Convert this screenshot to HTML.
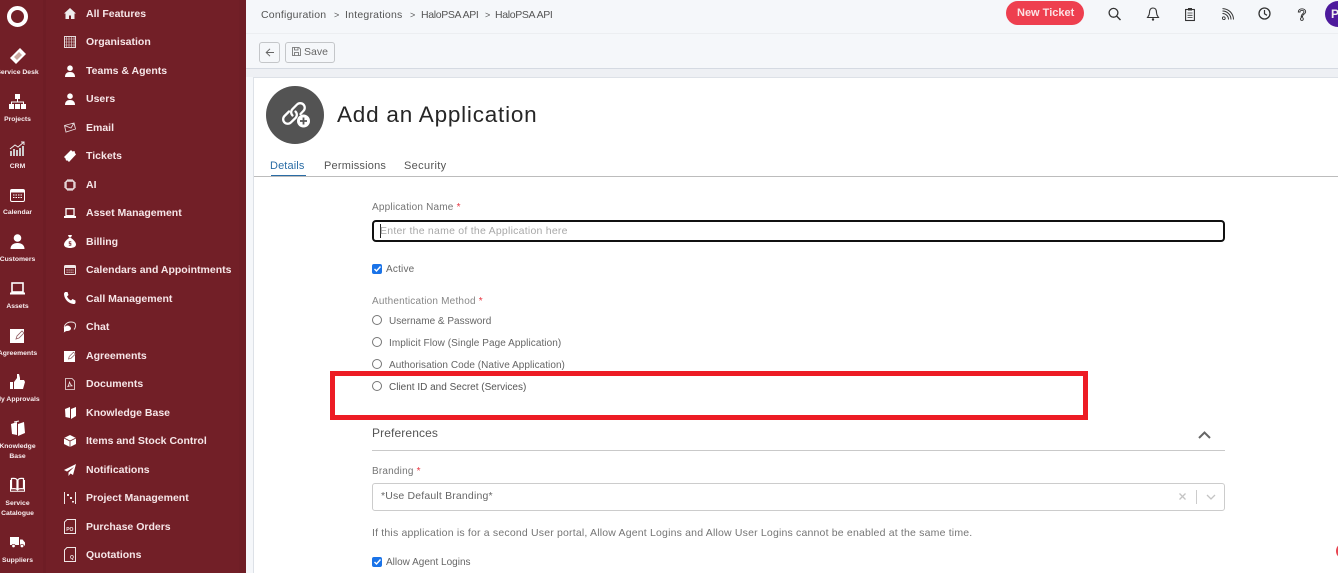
<!DOCTYPE html>
<html><head><meta charset="utf-8">
<style>
html,body{margin:0;padding:0;width:1338px;height:573px;overflow:hidden;background:#f5f7fa;font-family:"Liberation Sans",sans-serif}
#w{position:absolute;left:0;top:0;width:1338px;height:573px;overflow:hidden;background:#f5f7fa}
.a,.t{position:absolute}
.t{white-space:nowrap;line-height:14px}
.n{left:86px;color:#f6e6e8;font-size:10.5px;font-weight:bold;letter-spacing:0}
.r{color:#f8eef0;font-size:6.8px;font-weight:bold;text-align:center;width:100px;left:-32.5px;line-height:10px;white-space:nowrap;margin-top:1px}
.c{color:#555;font-size:10.5px;letter-spacing:.22px}
.g{color:#555;font-size:9px}
.l{color:#757575;font-size:10px;letter-spacing:.2px}
.o{color:#666;font-size:10px;letter-spacing:0}
.red{color:#e8343f}
.rb{position:absolute;left:372px;width:10px;height:10px;border:1px solid #777;border-radius:50%;background:#fff;box-sizing:border-box}
.cb{position:absolute;left:372px;width:10px;height:10px;border-radius:2px;background:#1a73e8}
svg{position:absolute;overflow:visible}
</style></head><body><div id="w">

<div class="a" style="left:0;top:0;width:246px;height:573px;background:#721f27"></div>
<div class="a" style="left:43px;top:0;width:3px;height:573px;background:#6e1d25"></div>
<div class="a" style="left:239px;top:0;width:7px;height:573px;background:#6f1e26"></div>

<!-- rail -->
<div class="a" style="left:7px;top:6px;width:21px;height:21px;box-sizing:border-box;border:4px solid #fff;border-radius:50%"></div>

<svg style="left:9px;top:47px" width="18" height="18" viewBox="0 0 18 18"><path d="M1 11 L11 1 L17 7 L7 17 Z" fill="#fff"/><path d="M5 10 L10 5 L13 8 L8 13 Z" fill="#c9a9a0"/></svg>
<div class="a r" style="top:67px">Service Desk</div>
<svg style="left:9px;top:94px" width="17" height="15" viewBox="0 0 17 15"><rect x="6" y="0" width="5" height="5" fill="#fff"/><path d="M8.500 5v3M2.500 10V8h12v2" stroke="#fff" fill="none"/><rect x="0" y="10" width="5" height="5" fill="#fff"/><rect x="6" y="10" width="5" height="5" fill="#fff"/><rect x="12" y="10" width="5" height="5" fill="#fff"/></svg>
<div class="a r" style="top:114px">Projects</div>
<svg style="left:10px;top:141px" width="15" height="15" viewBox="0 0 15 15"><path d="M1 15V10M4 15V8M7 15V9M10 15V7M13 15V5" stroke="#ccc" stroke-width="2"/><path d="M0 8 L5 4 L8 6 L14 1M11 1h3v3" stroke="#eee" fill="none"/></svg>
<div class="a r" style="top:161px">CRM</div>
<svg style="left:10px;top:188px" width="15" height="14" viewBox="0 0 15 14"><rect x=".5" y="1.500" width="14" height="12" rx="1.500" fill="none" stroke="#fff"/><rect x="1" y="2" width="13" height="2.500" fill="#fff"/><path d="M3 7h9M3 9.500h9" stroke="#fff" stroke-dasharray="1.500 1"/></svg>
<div class="a r" style="top:207px">Calendar</div>
<svg style="left:10px;top:234px" width="15" height="15" viewBox="0 0 14 15"><circle cx="7" cy="4" r="3.800" fill="#fff"/><path d="M0 15c0-4 3-6 7-6s7 2 7 6z" fill="#fff"/></svg>
<div class="a r" style="top:254px">Customers</div>
<svg style="left:10px;top:282px" width="15" height="13" viewBox="0 0 15 13"><rect x="2" y="1" width="11" height="9" fill="none" stroke="#fff" stroke-width="1.600"/><rect x="0" y="10.500" width="15" height="2" fill="#fff"/></svg>
<div class="a r" style="top:301px">Assets</div>
<svg style="left:10px;top:328px" width="15" height="15" viewBox="0 0 15 15"><rect x="0" y="1" width="14" height="14" fill="#fff"/><path d="M6 11l1-3 5-5 2 2-5 5z" fill="#fff" stroke="#8f5a5f" stroke-width=".8"/></svg>
<div class="a r" style="top:348px">Agreements</div>
<svg style="left:10px;top:374px" width="15" height="16" viewBox="0 0 15 16"><path d="M0 8h3v7H0zM4 8l3-4V0h2l1 4v2h4l1 2-2 7H4z" fill="#fff"/></svg>
<div class="a r" style="top:394px">My Approvals</div>
<svg style="left:11px;top:421px" width="14" height="16" viewBox="0 0 14 16"><path d="M0 3l6-2v13l-5-1zM7 3l6-2 1 11-7 3z" fill="#fff"/><path d="M3 1l5-1M9 5l3-1" stroke="#fff"/></svg>
<div class="a r" style="top:441px">Knowledge</div>
<div class="a r" style="top:451px">Base</div>
<svg style="left:10px;top:478px" width="15" height="14" viewBox="0 0 15 14"><path d="M1.500 .5c2-.3 4.500-.3 5.500 1.300v9.700c-1-1-3.500-1-5.500-.7zM8 1.800c1-1.600 3.500-1.600 5.500-1.300v10.300c-2-.3-4.500-.3-5.500.7z" fill="none" stroke="#fff" stroke-width="1.200"/><path d="M.5 2v11.300h14V2" fill="none" stroke="#fff"/></svg>
<div class="a r" style="top:498px">Service</div>
<div class="a r" style="top:508px">Catalogue</div>
<svg style="left:10px;top:537px" width="15" height="11" viewBox="0 0 15 11"><rect x="0" y="0" width="9" height="8" fill="#fff"/><path d="M10 2.500h2.500L15 5.500V8.500h-5z" fill="#fff"/><circle cx="3.500" cy="9" r="1.700" fill="#fff" stroke="#721f27" stroke-width=".6"/><circle cx="12" cy="9" r="1.700" fill="#fff" stroke="#721f27" stroke-width=".6"/></svg>
<div class="a r" style="top:555px">Suppliers</div>

<!-- menu icons -->
<svg style="left:64px;top:8px" width="12" height="11" viewBox="0 0 12 11"><path d="M6 0L0 5.500h1.500V11h3.500V7.500h2V11h3.500V5.500H12z" fill="#eee"/></svg>
<svg style="left:64px;top:36px" width="12" height="12" viewBox="0 0 12 12"><rect x=".5" y=".5" width="11" height="11" fill="none" stroke="#e5dadb"/><path d="M2.500 0v12M5 0v12M7.500 0v12M10 0v12M0 3h12M0 6h12M0 9h12" stroke="#e5dadb" stroke-width=".6"/></svg>
<svg style="left:65px;top:65px" width="10" height="12" viewBox="0 0 10 12"><circle cx="5" cy="3.200" r="2.800" fill="#fff"/><path d="M0 12c0-3.500 2-5 5-5s5 1.500 5 5z" fill="#fff"/></svg>
<svg style="left:65px;top:93px" width="10" height="12" viewBox="0 0 10 12"><circle cx="5" cy="3.200" r="2.800" fill="#fff"/><path d="M0 12c0-3.500 2-5 5-5s5 1.500 5 5z" fill="#fff"/></svg>
<svg style="left:64px;top:122px" width="12" height="11" viewBox="0 0 12 11"><path d="M.5 3.500L10 1l1.500 6-9.500 3z M.5 3.500L7 6l3-5" fill="none" stroke="#e5dadb" stroke-width=".9"/></svg>
<svg style="left:64px;top:150px" width="12" height="12" viewBox="0 0 12 12"><path d="M0 7L7 0l1.500 1.500 2-.5.5 2L12 4.500 5 12 3.500 10.500 2 10.500 1.500 8.500z" fill="#fff"/></svg>
<svg style="left:64px;top:179px" width="12" height="12" viewBox="0 0 12 12"><rect x="2" y="2" width="8" height="8" rx="1" fill="none" stroke="#fff" stroke-width="1.200"/><path d="M4 0v2M6 0v2M8 0v2M4 10v2M6 10v2M8 10v2M0 4h2M0 6h2M0 8h2M10 4h2M10 6h2M10 8h2" stroke="#fff"/></svg>
<svg style="left:64px;top:208px" width="12" height="10" viewBox="0 0 12 10"><rect x="2" y=".7" width="8" height="7" fill="none" stroke="#fff" stroke-width="1.300"/><rect x="0" y="8" width="12" height="2" fill="#fff"/></svg>
<svg style="left:64px;top:235px" width="12" height="13" viewBox="0 0 12 13"><path d="M4 0h4L7 2.500H5z" fill="#fff"/><path d="M5 3h2c2 1.500 5 4 5 6.500S9 13 6 13 0 12 0 9.500 3 4.500 5 3z" fill="#fff"/><path d="M7.300 6.800H5.200v1.700h1.700v1.700H4.800" fill="none" stroke="#721f27" stroke-width=".8"/></svg>
<svg style="left:64px;top:264px" width="12" height="11" viewBox="0 0 12 11"><rect x=".5" y="1.500" width="11" height="9" rx="1" fill="none" stroke="#f0e6e6"/><rect x="1" y="2" width="10" height="2" fill="#f0e6e6"/><path d="M2.500 6h7M2.500 8.300h7" stroke="#f0e6e6" stroke-dasharray="1.200 .8"/></svg>
<svg style="left:64px;top:292px" width="12" height="12" viewBox="0 0 12 12"><path d="M1 0h2.500l1 3L3 4.500c.8 1.800 2.200 3.200 4 4L8.500 7l3 1.500V11l-1 1C4.500 12 0 7 0 1.500z" fill="#fff"/></svg>
<svg style="left:64px;top:321px" width="12" height="11" viewBox="0 0 12 11"><path d="M5 8.500c-1.500 0-3 1-4.500 2 0 0 .5-1.500 0-2.500C-.5 4 3 1 7 1s5 2 4.500 4.500c-.3 1.500-1 2.500-1.500 3" fill="none" stroke="#f0e6e6" stroke-width=".9"/><path d="M0 8c0-2 2-3.500 3.500-3.500S7 6 7 7.500 5 10 3 10 0 11 0 11z" fill="#fff"/></svg>
<svg style="left:64px;top:350px" width="12" height="12" viewBox="0 0 12 12"><rect x="0" y="1" width="11" height="11" fill="#fff"/><path d="M4.500 9l.7-2.500L9.500 2.200 11.500 4 7 8.300z" fill="#fff" stroke="#8f5a5f" stroke-width=".7"/></svg>
<svg style="left:65px;top:378px" width="10" height="12" viewBox="0 0 10 12"><path d="M.5.500H7L9.500 3v8.500H.5zM2.500 9c1-1 2-4 2-5.500C4.500 5 6 7.500 7.500 8 6 7.800 3.500 8 2.500 9z" fill="none" stroke="#f0e6e6" stroke-width=".8"/></svg>
<svg style="left:65px;top:407px" width="11" height="12" viewBox="0 0 11 12"><path d="M0 2l5-2v11L.5 10zM6 2l5-2v9l-5 3z" fill="#fff"/></svg>
<svg style="left:64px;top:435px" width="12" height="12" viewBox="0 0 12 12"><path d="M0 3l6-3 6 3v6l-6 3-6-3z" fill="#fff"/><path d="M0 3l6 3 6-3M6 6v6" stroke="#721f27" fill="none" stroke-width=".8"/></svg>
<svg style="left:64px;top:464px" width="12" height="12" viewBox="0 0 12 12"><path d="M12 0L0 6l3 1.500L10 3 4.500 8.500V12l2-2.500L9 11z" fill="#fff"/></svg>
<svg style="left:64px;top:492px" width="12" height="12" viewBox="0 0 12 12"><path d="M.5 0v12M11.500 0v12" stroke="#f0e6e6"/><path d="M3 2h2v2H3zM6 5h2v2H6zM8 9h2v1.500H8z" fill="#f0e6e6"/></svg>
<svg style="left:64px;top:519px" width="12" height="15" viewBox="0 0 12 15"><path d="M.5 3L3 .5h8.500v14H.5z" fill="none" stroke="#f0e6e6"/><text x="2.200" y="12" font-size="5" font-weight="bold" fill="#f0e6e6" font-family="Liberation Sans">PO</text></svg>
<svg style="left:64px;top:547px" width="12" height="15" viewBox="0 0 12 15"><path d="M.5 3L3 .5h8.500v14H.5z" fill="none" stroke="#f0e6e6"/><text x="6" y="12" font-size="5" font-weight="bold" fill="#f0e6e6" font-family="Liberation Sans">Q</text></svg>

<div class="t n" style="top:7px">All Features</div>
<div class="t n" style="top:35px">Organisation</div>
<div class="t n" style="top:64px">Teams &amp; Agents</div>
<div class="t n" style="top:92px">Users</div>
<div class="t n" style="top:121px">Email</div>
<div class="t n" style="top:149px">Tickets</div>
<div class="t n" style="top:178px">AI</div>
<div class="t n" style="top:206px">Asset Management</div>
<div class="t n" style="top:235px">Billing</div>
<div class="t n" style="top:263px">Calendars and Appointments</div>
<div class="t n" style="top:292px">Call Management</div>
<div class="t n" style="top:320px">Chat</div>
<div class="t n" style="top:349px">Agreements</div>
<div class="t n" style="top:377px">Documents</div>
<div class="t n" style="top:406px">Knowledge Base</div>
<div class="t n" style="top:434px">Items and Stock Control</div>
<div class="t n" style="top:463px">Notifications</div>
<div class="t n" style="top:491px">Project Management</div>
<div class="t n" style="top:520px">Purchase Orders</div>
<div class="t n" style="top:548px">Quotations</div>

<!-- top bar -->
<div class="a" style="left:246px;top:33px;width:1092px;height:1px;background:#eceef1"></div>
<div class="a" style="left:246px;top:68px;width:1092px;height:1px;background:#d5dae2"></div>
<div class="a" style="left:246px;top:69px;width:1092px;height:8px;background:#eef0f4"></div>
<div class="t c" style="left:261px;top:8px">Configuration</div>
<div class="t g" style="left:334px;top:8px">&gt;</div>
<div class="t c" style="left:345px;top:8px">Integrations</div>
<div class="t g" style="left:410px;top:8px">&gt;</div>
<div class="t c" style="left:421px;top:8px;letter-spacing:-.35px">HaloPSA API</div>
<div class="t g" style="left:485px;top:8px">&gt;</div>
<div class="t c" style="left:495px;top:8px;letter-spacing:-.35px">HaloPSA API</div>

<div class="a" style="left:259px;top:42px;width:21px;height:21px;box-sizing:border-box;border:1px solid #c4c6c9;border-radius:3px"></div>
<svg style="left:265px;top:48px" width="10" height="9" viewBox="0 0 10 9"><path d="M5 .8L1.200 4.500 5 8.200M1.500 4.500H9" fill="none" stroke="#666"/></svg>
<div class="a" style="left:285px;top:42px;width:50px;height:21px;box-sizing:border-box;border:1px solid #c4c6c9;border-radius:3px"></div>
<svg style="left:292px;top:47px" width="9" height="9" viewBox="0 0 9 9"><path d="M.5.500H7L8.500 2v6.500H.5zM2.500 .5v2.500h3.500V.5M2.500 8.500V5.500h4v3" fill="none" stroke="#666" stroke-width=".8"/></svg>
<div class="t c" style="left:304px;top:45px;color:#666;letter-spacing:0">Save</div>

<div class="a" style="left:1006px;top:1px;width:78px;height:24px;background:#ee3f4f;border-radius:12px"></div>
<div class="t" style="left:1017px;top:6px;color:#fbe3e5;font-size:11px;font-weight:bold;letter-spacing:0">New Ticket</div>

<svg style="left:1108px;top:7px" width="13" height="14" viewBox="0 0 13 14"><circle cx="5.500" cy="5.800" r="4.400" fill="none" stroke="#333" stroke-width="1.300"/><path d="M8.800 9.200L12.500 13" stroke="#333" stroke-width="1.400"/></svg>
<svg style="left:1147px;top:7px" width="12" height="14" viewBox="0 0 12 14"><path d="M6 1c2.500 0 3.500 2 3.500 4.500 0 2.500 1 3.500 2 5H.5c1-1.500 2-2.500 2-5C2.500 3 3.500 1 6 1z" fill="none" stroke="#333" stroke-width="1.100"/><circle cx="6" cy="12.500" r="1.200" fill="#333"/></svg>
<svg style="left:1185px;top:8px" width="10" height="13" viewBox="0 0 10 13"><rect x=".6" y="1.500" width="8.800" height="11" fill="none" stroke="#333" stroke-width="1.100"/><rect x="3" y="0" width="4" height="2.500" fill="#333"/><path d="M2.500 5h5M2.500 7.300h5M2.500 9.600h5" stroke="#333" stroke-width=".8"/></svg>
<svg style="left:1222px;top:8px" width="12" height="12" viewBox="0 0 12 12"><circle cx="1.800" cy="10.200" r="1.400" fill="none" stroke="#333" stroke-width=".9"/><path d="M.5 5.500A6 6 0 0 1 6.500 11.500M.5 3A8.500 8.500 0 0 1 9 11.500M.5.600A11 11 0 0 1 11.500 11.500" fill="none" stroke="#333" stroke-width="1"/></svg>
<svg style="left:1258px;top:7px" width="13" height="13" viewBox="0 0 13 13"><circle cx="6.500" cy="6.500" r="5.500" fill="none" stroke="#333" stroke-width="1.300"/><path d="M6.500 3v3.800L9 8.300" fill="none" stroke="#333" stroke-width="1.200"/></svg>
<svg style="left:1297px;top:8px" width="10" height="13" viewBox="0 0 10 13"><path d="M1.300 4C1.300 2 3 .8 5 .8S8.700 2 8.700 4C8.700 6 5.500 6 5.500 8.500H4.200C4.200 6 7 5.500 7 4 7 3 6 2.300 5 2.300S3 3 3 4z" fill="none" stroke="#333" stroke-width=".9"/><circle cx="4.900" cy="11" r="1.400" fill="none" stroke="#333" stroke-width=".9"/></svg>
<div class="a" style="left:1325px;top:1px;width:26px;height:26px;border-radius:50%;background:#4d1a9c"></div>
<div class="t" style="left:1331px;top:7px;color:#eee;font-size:12px;font-weight:bold">P</div>

<!-- card -->
<div class="a" style="left:253px;top:77px;width:1085px;height:496px;background:#fff;border:1px solid #dde1e7;border-width:1px 0 0 1px;box-sizing:border-box"></div>
<div class="a" style="left:266px;top:86px;width:58px;height:58px;border-radius:50%;background:#535353"></div>
<svg style="left:280px;top:98px" width="32" height="32" viewBox="0 0 32 32"><g fill="none" stroke="#fff" stroke-width="2.300" stroke-linecap="round"><path d="M9 13.500L4.500 18a4.500 4.500 0 0 0 6.400 6.400L15.500 20a4.500 4.500 0 0 0 0-6.400"/><path d="M12.500 17.500a4.500 4.500 0 0 1 0-6.400L17 6.500a4.500 4.500 0 0 1 6.400 6.400L20.500 16"/></g><circle cx="23.500" cy="23" r="6.500" fill="#fff"/><path d="M23.500 19.500v7M20 23h7" stroke="#535353" stroke-width="1.800"/></svg>
<div class="t" style="left:337px;top:101px;font-size:22.500px;line-height:28px;color:#262626;letter-spacing:.78px">Add an Application</div>

<div class="t" style="left:270px;top:159px;font-size:11px;color:#2a6ca5;letter-spacing:.12px">Details</div>
<div class="t" style="left:324px;top:159px;font-size:11px;color:#555;letter-spacing:.2px">Permissions</div>
<div class="t" style="left:404px;top:159px;font-size:11px;color:#555;letter-spacing:.35px">Security</div>
<div class="a" style="left:254px;top:176px;width:1084px;height:1px;background:#bcbcbc"></div>
<div class="a" style="left:271px;top:175px;width:35px;height:1px;background:#2a6ca5"></div>

<!-- form -->
<div class="t l" style="left:372px;top:201px">Application Name <span class="red">*</span></div>
<div class="a" style="left:372px;top:220px;width:853px;height:22px;box-sizing:border-box;border:2px solid #111;border-radius:4px;background:#fff"></div>
<div class="a" style="left:380px;top:224px;width:1px;height:14px;background:#222"></div>
<div class="t" style="left:380px;top:224px;color:#a8a8a8;font-size:10.500px;letter-spacing:.24px">Enter the name of the Application here</div>

<div class="cb" style="top:264px"></div>
<svg style="left:374px;top:266px" width="7" height="6" viewBox="0 0 7 6"><path d="M.5 3l2 2L6.500.5" fill="none" stroke="#fff" stroke-width="1.400"/></svg>
<div class="t l" style="left:386px;top:263px;color:#666">Active</div>

<div class="t l" style="left:372px;top:295px;color:#888">Authentication Method <span class="red">*</span></div>
<div class="rb" style="top:315px"></div>
<div class="t o" style="left:389px;top:315px">Username &amp; Password</div>
<div class="rb" style="top:337px"></div>
<div class="t o" style="left:389px;top:337px;letter-spacing:.07px">Implicit Flow (Single Page Application)</div>
<div class="rb" style="top:359px"></div>
<div class="t o" style="left:389px;top:359px;letter-spacing:.05px">Authorisation Code (Native Application)</div>
<div class="rb" style="top:381px"></div>
<div class="t o" style="left:389px;top:381px;color:#555">Client ID and Secret (Services)</div>

<div class="a" style="left:330px;top:371px;width:758px;height:49px;box-sizing:border-box;border:5px solid #ed1c24"></div>

<div class="t" style="left:372px;top:426px;font-size:12px;color:#555;letter-spacing:.12px">Preferences</div>
<svg style="left:1198px;top:431px" width="13" height="8" viewBox="0 0 13 8"><path d="M1 7l5.500-5.500L12 7" fill="none" stroke="#666" stroke-width="2"/></svg>
<div class="a" style="left:372px;top:450px;width:853px;height:1px;background:#c9c9c9"></div>

<div class="t l" style="left:372px;top:465px">Branding <span class="red">*</span></div>
<div class="a" style="left:372px;top:483px;width:853px;height:28px;box-sizing:border-box;border:1px solid #ccc;border-radius:3px;background:#fff"></div>
<div class="t" style="left:381px;top:489px;font-size:10.500px;color:#666;letter-spacing:.17px">*Use Default Branding*</div>
<svg style="left:1179px;top:493px" width="7" height="7" viewBox="0 0 7 7"><path d="M.5.500l6 6M6.500.500l-6 6" stroke="#c4c4c4" stroke-width="1.300"/></svg>
<div class="a" style="left:1196px;top:490px;width:1px;height:14px;background:#ccc"></div>
<svg style="left:1206px;top:494px" width="10" height="6" viewBox="0 0 10 6"><path d="M1 1l4 4 4-4" fill="none" stroke="#c4c4c4" stroke-width="1.300"/></svg>

<div class="t" style="left:372px;top:526px;font-size:10.500px;color:#757575;letter-spacing:.185px">If this application is for a second User portal, Allow Agent Logins and Allow User Logins cannot be enabled at the same time.</div>

<div class="cb" style="top:557px"></div>
<svg style="left:374px;top:559px" width="7" height="6" viewBox="0 0 7 6"><path d="M.5 3l2 2L6.500.5" fill="none" stroke="#fff" stroke-width="1.400"/></svg>
<div class="t o" style="left:386px;top:556px">Allow Agent Logins</div>

<div class="a" style="left:1336px;top:543px;width:16px;height:16px;border-radius:50%;background:#e8434f"></div>
</div></body></html>
